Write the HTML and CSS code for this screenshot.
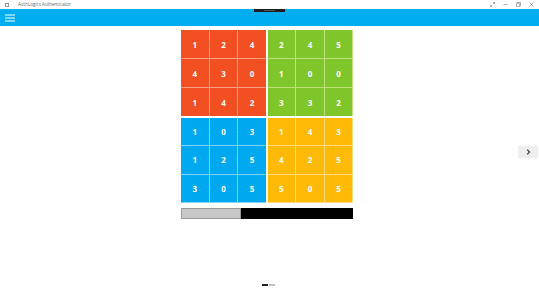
FILE: index.html
```html
<!DOCTYPE html>
<html>
<head>
<meta charset="utf-8">
<link rel="stylesheet" href="styles.css">
</head>
<body>
<div class="app">
  <div class="titlebar">
    <span class="sysicon"></span>
    <span class="title">AuthLogics Authenticator</span>
    <span class="spacer"></span>
    <span class="ctl">
      <svg width="5" height="5" viewBox="0 0 6 6"><path d="M0.5 5.5 L2.5 3.5 M3.5 2.5 L5.5 0.5 M3.5 0.5 H5.5 V2.5 M0.5 3.5 V5.5 H2.5" stroke="#777" stroke-width="0.7" fill="none"/></svg>
    </span>
    <span class="ctl">
      <svg width="5" height="5" viewBox="0 0 6 6"><path d="M0.5 3 H5.5" stroke="#777" stroke-width="0.7"/></svg>
    </span>
    <span class="ctl">
      <svg width="5" height="5" viewBox="0 0 6 6"><path d="M0.5 1.5 H4.5 V5.5 H0.5 Z M1.5 1.5 V0.5 H5.5 V4.5 H4.5" stroke="#777" stroke-width="0.7" fill="none"/></svg>
    </span>
    <span class="ctl">
      <svg width="5" height="5" viewBox="0 0 6 6"><path d="M0.7 0.7 L5.3 5.3 M5.3 0.7 L0.7 5.3" stroke="#777" stroke-width="0.7"/></svg>
    </span>
  </div>
  <div class="appbar">
    <svg class="hamburger" width="10" height="8" viewBox="0 0 10 8"><path d="M0 1 H10 M0 4 H10 M0 7 H10" stroke="#fff" stroke-width="1"/></svg>
  </div>
  <div class="dragbar"></div>
  <main class="content">
    <div class="grid">
      <div class="quad red">
        <div class="cell">1</div><div class="cell">2</div><div class="cell">4</div>
        <div class="cell">4</div><div class="cell">3</div><div class="cell">0</div>
        <div class="cell">1</div><div class="cell">4</div><div class="cell">2</div>
      </div>
      <div class="quad green">
        <div class="cell">2</div><div class="cell">4</div><div class="cell">5</div>
        <div class="cell">1</div><div class="cell">0</div><div class="cell">0</div>
        <div class="cell">3</div><div class="cell">3</div><div class="cell">2</div>
      </div>
      <div class="quad blue">
        <div class="cell">1</div><div class="cell">0</div><div class="cell">3</div>
        <div class="cell">1</div><div class="cell">2</div><div class="cell">5</div>
        <div class="cell">3</div><div class="cell">0</div><div class="cell">5</div>
      </div>
      <div class="quad yellow">
        <div class="cell">1</div><div class="cell">4</div><div class="cell">3</div>
        <div class="cell">4</div><div class="cell">2</div><div class="cell">5</div>
        <div class="cell">5</div><div class="cell">0</div><div class="cell">5</div>
      </div>
    </div>
    <div class="progress"><div class="progress-fill" style="width:60px"></div></div>
  </main>
  <div class="nextbtn">
    <svg width="5" height="6" viewBox="0 0 5 6"><path d="M1.2 0.6 L3.6 3 L1.2 5.4" stroke="#333" stroke-width="1.1" fill="none"/></svg>
  </div>
  <div class="pager"><span class="dot on"></span><span class="dot"></span></div>
</div>
</body>
</html>
```
FILE: styles.css
```css
html, body {
  margin: 0;
  padding: 0;
  background: #fff;
  width: 539px;
  height: 292px;
  overflow: hidden;
  font-family: "Open Sans", "Liberation Sans", sans-serif;
}
.app {
  position: relative;
  width: 539px;
  height: 292px;
  display: flex;
  flex-direction: column;
}
.titlebar {
  height: 9px;
  display: flex;
  align-items: center;
  padding: 0 1px 0 4px;
}
.sysicon {
  width: 2px;
  height: 2px;
  border: 0.6px solid #999;
  margin-right: 9px;
  margin-left: 1px;
}
.title {
  font-size: 4.5px;
  color: #666;
  line-height: 9px;
}
.spacer { flex: 1; }
.ctl {
  width: 13px;
  height: 9px;
  display: flex;
  align-items: center;
  justify-content: center;
}
.appbar {
  height: 17px;
  background: #00adef;
  display: flex;
  align-items: center;
  padding-left: 5px;
}
.dragbar {
  position: absolute;
  left: 254px;
  top: 9px;
  width: 31px;
  height: 3px;
  background: #1e1e1e;
}
.dragbar::after {
  content: "";
  position: absolute;
  left: 10px;
  top: 1px;
  width: 11px;
  height: 1px;
  background: #555;
}
.content {
  display: flex;
  flex-direction: column;
  align-items: center;
  padding-top: 4px;
  padding-right: 5px;
}
.grid {
  width: 172px;
  display: grid;
  grid-template-columns: 85px 85px;
  grid-template-rows: 86px 85px;
  gap: 1.5px;
}
.quad {
  display: grid;
  grid-template-columns: repeat(3, 1fr);
  grid-template-rows: repeat(3, 1fr);
  gap: 1px;
}
.cell {
  display: flex;
  align-items: center;
  justify-content: center;
  color: #fff;
  font-weight: 700;
  font-size: 8px;
}
.red { background: #f7a07f; }
.red .cell { background: #f25022; }
.green { background: #bfe07a; }
.green .cell { background: #7fc62a; }
.blue { background: #7fd3f7; }
.blue .cell { background: #00a8ef; }
.yellow { background: #ffdc7f; }
.yellow .cell { background: #ffba08; }
.progress {
  margin-top: 5px;
  width: 172px;
  height: 11px;
  background: #000;
  display: flex;
}
.progress-fill {
  height: 11px;
  box-sizing: border-box;
  background: #c8c8c8;
  border: 1px solid #9a9a9a;
}
.nextbtn {
  position: absolute;
  left: 518px;
  top: 146px;
  width: 20px;
  height: 12px;
  background: #eeeeee;
  display: flex;
  align-items: center;
  justify-content: center;
}
.pager {
  position: absolute;
  left: 262px;
  top: 284px;
  display: flex;
  gap: 1px;
}
.dot {
  width: 6px;
  height: 2px;
  background: #c4c4c4;
}
.dot.on { background: #222; }
```
